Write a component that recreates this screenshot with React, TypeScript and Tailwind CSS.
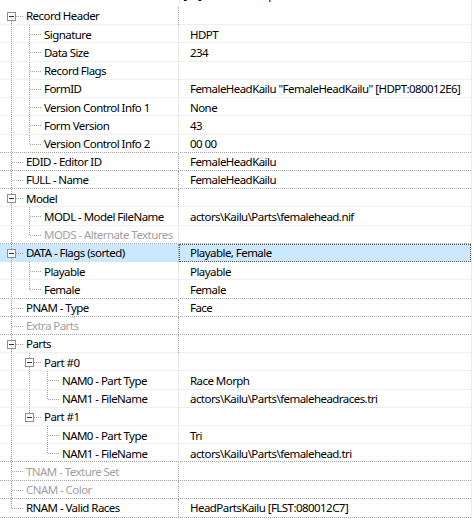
import React from "react";

type R = {
  n: string;
  v?: string;
  l: number;
  box?: boolean;
  gray?: boolean;
  last?: boolean;
  sel?: boolean;
};

const rows: R[] = [
  { n: "Record Header", l: 1, box: true },
  { n: "Signature", v: "HDPT", l: 2 },
  { n: "Data Size", v: "234", l: 2 },
  { n: "Record Flags", l: 2 },
  { n: "FormID", v: 'FemaleHeadKailu "FemaleHeadKailu" [HDPT:080012E6]', l: 2 },
  { n: "Version Control Info 1", v: "None", l: 2 },
  { n: "Form Version", v: "43", l: 2 },
  { n: "Version Control Info 2", v: "00 00", l: 2, last: true },
  { n: "EDID - Editor ID", v: "FemaleHeadKailu", l: 1 },
  { n: "FULL - Name", v: "FemaleHeadKailu", l: 1 },
  { n: "Model", l: 1, box: true },
  { n: "MODL - Model FileName", v: "actors\\Kailu\\Parts\\femalehead.nif", l: 2 },
  { n: "MODS - Alternate Textures", l: 2, gray: true, last: true },
  { n: "DATA - Flags (sorted)", v: "Playable, Female", l: 1, box: true, sel: true },
  { n: "Playable", v: "Playable", l: 2 },
  { n: "Female", v: "Female", l: 2, last: true },
  { n: "PNAM - Type", v: "Face", l: 1 },
  { n: "Extra Parts", l: 1, gray: true },
  { n: "Parts", l: 1, box: true },
  { n: "Part #0", l: 2, box: true },
  { n: "NAM0 - Part Type", v: "Race Morph", l: 3 },
  { n: "NAM1 - FileName", v: "actors\\Kailu\\Parts\\femaleheadraces.tri", l: 3, last: true },
  { n: "Part #1", l: 2, box: true, last: true },
  { n: "NAM0 - Part Type", v: "Tri", l: 3 },
  { n: "NAM1 - FileName", v: "actors\\Kailu\\Parts\\femalehead.tri", l: 3, last: true },
  { n: "TNAM - Texture Set", l: 1, gray: true },
  { n: "CNAM - Color", l: 1, gray: true },
  { n: "RNAM - Valid Races", v: "HeadPartsKailu [FLST:080012C7]", l: 1, last: true },
];

function computeGuides(list: R[]): boolean[][] {
  const stack: boolean[] = [];
  return list.map((r) => {
    stack[r.l] = !!r.last;
    stack.length = r.l + 1;
    const g: boolean[] = [];
    for (let k = 1; k < r.l; k++) g[k] = !stack[k];
    return g;
  });
}

const LINE = "#a0a0a0";

function Lines({ r, g, first }: { r: R; g: boolean[]; first: boolean }) {
  const L = r.l;
  const w = 18 * L + 8;
  const els: React.ReactNode[] = [];
  for (let k = 1; k < L; k++) {
    if (g[k]) {
      const x = 11 + 18 * (k - 1) + 0.5;
      els.push(
        <line key={"g" + k} x1={x} x2={x} y1="0" y2="100%" stroke={LINE} strokeDasharray="1 1" />
      );
    }
  }
  const xc = 11 + 18 * (L - 1);
  const x = xc + 0.5;
  if (!first) {
    els.push(<line key="t" x1={x} x2={x} y1="0" y2="9.5" stroke={LINE} strokeDasharray="1 1" />);
  }
  if (!r.last) {
    els.push(<line key="b" x1={x} x2={x} y1="9.5" y2="100%" stroke={LINE} strokeDasharray="1 1" />);
  }
  els.push(
    <line
      key="h"
      x1={r.box ? xc + 5 : xc + 1}
      x2={xc + 12}
      y1="9.5"
      y2="9.5"
      stroke={LINE}
      strokeDasharray="1 1"
    />
  );
  if (r.box) {
    els.push(
      <rect key="bx" x={xc - 3.5} y={5.5} width={8} height={8} fill="#ffffff" stroke="#8e8f8f" />
    );
    els.push(<line key="m" x1={xc - 2} x2={xc + 3} y1="9.5" y2="9.5" stroke="#333333" />);
  }
  return (
    <svg width={w} className="h-full shrink-0" shapeRendering="crispEdges">
      {els}
    </svg>
  );
}

export default function App() {
  const guides = computeGuides(rows);
  return (
    <div
      className="w-[474px] h-[525px] overflow-hidden bg-white text-black text-[11.5px] tracking-[-0.55px]"
      style={{ fontFamily: '"Noto Sans", "Open Sans", sans-serif' }}
    >
      <div className="w-[472px] border-r border-[#ececec]">
        <div className="h-[7px] overflow-hidden">
          <div className="flex h-[18px] mt-[-14px]">
            <div className="w-[179px] shrink-0" />
            <div className="flex items-center pl-[3px] gap-[3px] border-l border-[#e6e6e6]">
              <span>[01]</span>
              <span>KailuHead.esp</span>
            </div>
          </div>
        </div>
        {rows.map((r, i) => {
          const top = r.l === 1;
          const rowBorder =
            i === 0
              ? "border-t border-transparent"
              : top
              ? "border-t border-dotted border-[#a3a3a3]"
              : "border-t border-solid border-[#f0f0f0]";
          const bottom = i === rows.length - 1 ? "border-b border-dotted border-[#a3a3a3]" : "";
          const divider = top
            ? "border-r border-dotted border-[#a3a3a3]"
            : "border-r border-solid border-[#e6e6e6]";
          return (
            <div key={i} className={`flex h-[18.23px] box-content ${rowBorder} ${bottom} mt-[-1px] first:mt-0`}>
              <div
                className={`w-[179px] shrink-0 flex items-stretch ${divider} ${
                  r.sel ? "bg-[#cce8ff]" : ""
                }`}
              >
                <Lines r={r} g={guides[i]} first={i === 0} />
                <span
                  className={`flex items-center whitespace-nowrap ${
                    r.gray ? "text-[#a0a0a0]" : "text-black"
                  }`}
                >
                  {r.n}
                </span>
              </div>
              {r.sel ? (
                <div className="flex-1 flex items-center pl-[10px] bg-[#cce8ff] border border-dotted border-[#5a5a5a]">
                  <span className="whitespace-nowrap">{r.v}</span>
                </div>
              ) : (
                <div className="flex-1 flex items-center pl-[11px]">
                  <span className="whitespace-nowrap">{r.v ?? ""}</span>
                </div>
              )}
            </div>
          );
        })}
      </div>
    </div>
  );
}
